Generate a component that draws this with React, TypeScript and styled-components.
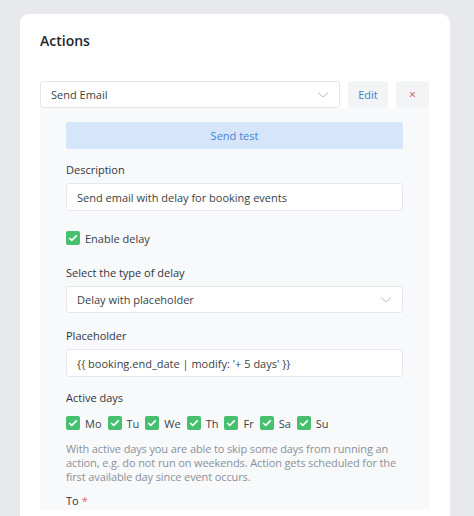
import React, { useState } from "react";
import styled, { createGlobalStyle } from "styled-components";

const GlobalStyle = createGlobalStyle`
  html, body {
    margin: 0;
    padding: 0;
    background: #e8e9ed;
    font-family: "Open Sans", "Noto Sans", sans-serif;
    color: #333840;
  }
`;

const Page = styled.div`
  height: 516px;
  overflow: hidden;
  padding: 14px 24px 0 20px;
`;

const Card = styled.div`
  background: #ffffff;
  border-radius: 9px 9px 0 0;
  padding: 17px 21px 0 20px;
  min-height: 520px;
`;

const Title = styled.h2`
  margin: 0 0 30px;
  font-size: 14px;
  font-weight: 600;
  line-height: 20px;
  color: #22262c;
`;

const ActionRow = styled.div`
  display: flex;
  gap: 8px;
  height: 27px;
`;

const SelectBox = styled.div`
  flex: 1;
  display: flex;
  align-items: center;
  justify-content: space-between;
  height: 27px;
  box-sizing: border-box;
  padding: 0 10px 0 10px;
  background: #ffffff;
  border: 1px solid #e4e6ea;
  border-radius: 3px;
  font-size: 11px;
  color: #3a3f46;
`;

const GhostButton = styled.button<{ $tone: "blue" | "red"; $w: number }>`
  width: ${(p) => p.$w}px;
  height: 27px;
  border: none;
  border-radius: 3px;
  background: #f3f4f6;
  font-family: inherit;
  font-size: ${(p) => (p.$tone === "blue" ? 11 : 12)}px;
  color: ${(p) => (p.$tone === "blue" ? "#3f7dcc" : "#c9506a")};
  padding: 0;
`;

const Panel = styled.div`
  background: #f8f9fb;
  padding: 14px 26px 0 26px;
`;

const SendTest = styled.button`
  display: block;
  width: 100%;
  height: 27px;
  border: none;
  border-radius: 2px;
  background: #d5e5fa;
  color: #4582d2;
  font-family: inherit;
  font-size: 11px;
  margin-bottom: 12px;
`;

const Label = styled.div`
  font-size: 11px;
  line-height: 18px;
  color: #30353c;
  margin-bottom: 4px;
`;

const Required = styled.span`
  color: #e0606e;
  margin-left: 3px;
`;

const Field = styled.div<{ $gap: number }>`
  margin-bottom: ${(p) => p.$gap}px;
`;

const TextBox = styled.div`
  height: 28px;
  box-sizing: border-box;
  display: flex;
  align-items: center;
  padding: 0 10px;
  background: #ffffff;
  border: 1px solid #e6e8eb;
  border-radius: 3px;
  font-size: 11px;
  color: #3a3f46;
`;

const CheckRow = styled.div`
  display: flex;
  align-items: center;
  gap: 6px;
  height: 18px;
`;

const DaysRow = styled(CheckRow)`
  margin-top: 7px;
`;

const CheckItem = styled.label`
  display: flex;
  align-items: center;
  gap: 5px;
  font-size: 11px;
  color: #3a3f46;
`;

const Box = styled.span`
  width: 14px;
  height: 14px;
  border-radius: 2px;
  background: #46c06f;
  display: inline-flex;
  align-items: center;
  justify-content: center;
`;

const Help = styled.p`
  margin: 10px 0 8px;
  font-size: 11px;
  line-height: 14px;
  letter-spacing: -0.12px;
  color: #8b9098;
`;

const Chevron = () => (
  <svg width="12" height="8" viewBox="0 0 12 8">
    <path d="M1 1.5 L6 6 L11 1.5" fill="none" stroke="#b8bcc3" strokeWidth="1" />
  </svg>
);

const Check = () => (
  <Box>
    <svg width="10" height="8" viewBox="0 0 10 8">
      <path d="M1.2 4 L3.8 6.4 L8.8 1.4" fill="none" stroke="#ffffff" strokeWidth="1.6" />
    </svg>
  </Box>
);

const days = ["Mo", "Tu", "We", "Th", "Fr", "Sa", "Su"];

export default function App() {
  const [delay] = useState(true);

  return (
    <Page>
      <GlobalStyle />
      <Card>
        <Title>Actions</Title>
        <ActionRow>
          <SelectBox>
            Send Email
            <Chevron />
          </SelectBox>
          <GhostButton $tone="blue" $w={40}>Edit</GhostButton>
          <GhostButton $tone="red" $w={33}>×</GhostButton>
        </ActionRow>
        <Panel>
          <SendTest>Send test</SendTest>
          <Field $gap={18}>
            <Label>Description</Label>
            <TextBox>Send email with delay for booking events</TextBox>
          </Field>
          <Field $gap={17}>
            <CheckRow>
              <CheckItem>
                {delay && <Check />}
                Enable delay
              </CheckItem>
            </CheckRow>
          </Field>
          <Field $gap={14}>
            <Label>Select the type of delay</Label>
            <SelectBox>
              Delay with placeholder
              <Chevron />
            </SelectBox>
          </Field>
          <Field $gap={12}>
            <Label>Placeholder</Label>
            <TextBox>{"{{ booking.end_date | modify: '+ 5 days' }}"}</TextBox>
          </Field>
          <Field $gap={0}>
            <Label>Active days</Label>
            <DaysRow>
              {days.map((d) => (
                <CheckItem key={d}>
                  <Check />
                  {d}
                </CheckItem>
              ))}
            </DaysRow>
            <Help>
              With active days you are able to skip some days from running an
              action, e.g. do not run on weekends. Action gets scheduled for the
              first available day since event occurs.
            </Help>
          </Field>
          <Label>
            To<Required>*</Required>
          </Label>
        </Panel>
      </Card>
    </Page>
  );
}
